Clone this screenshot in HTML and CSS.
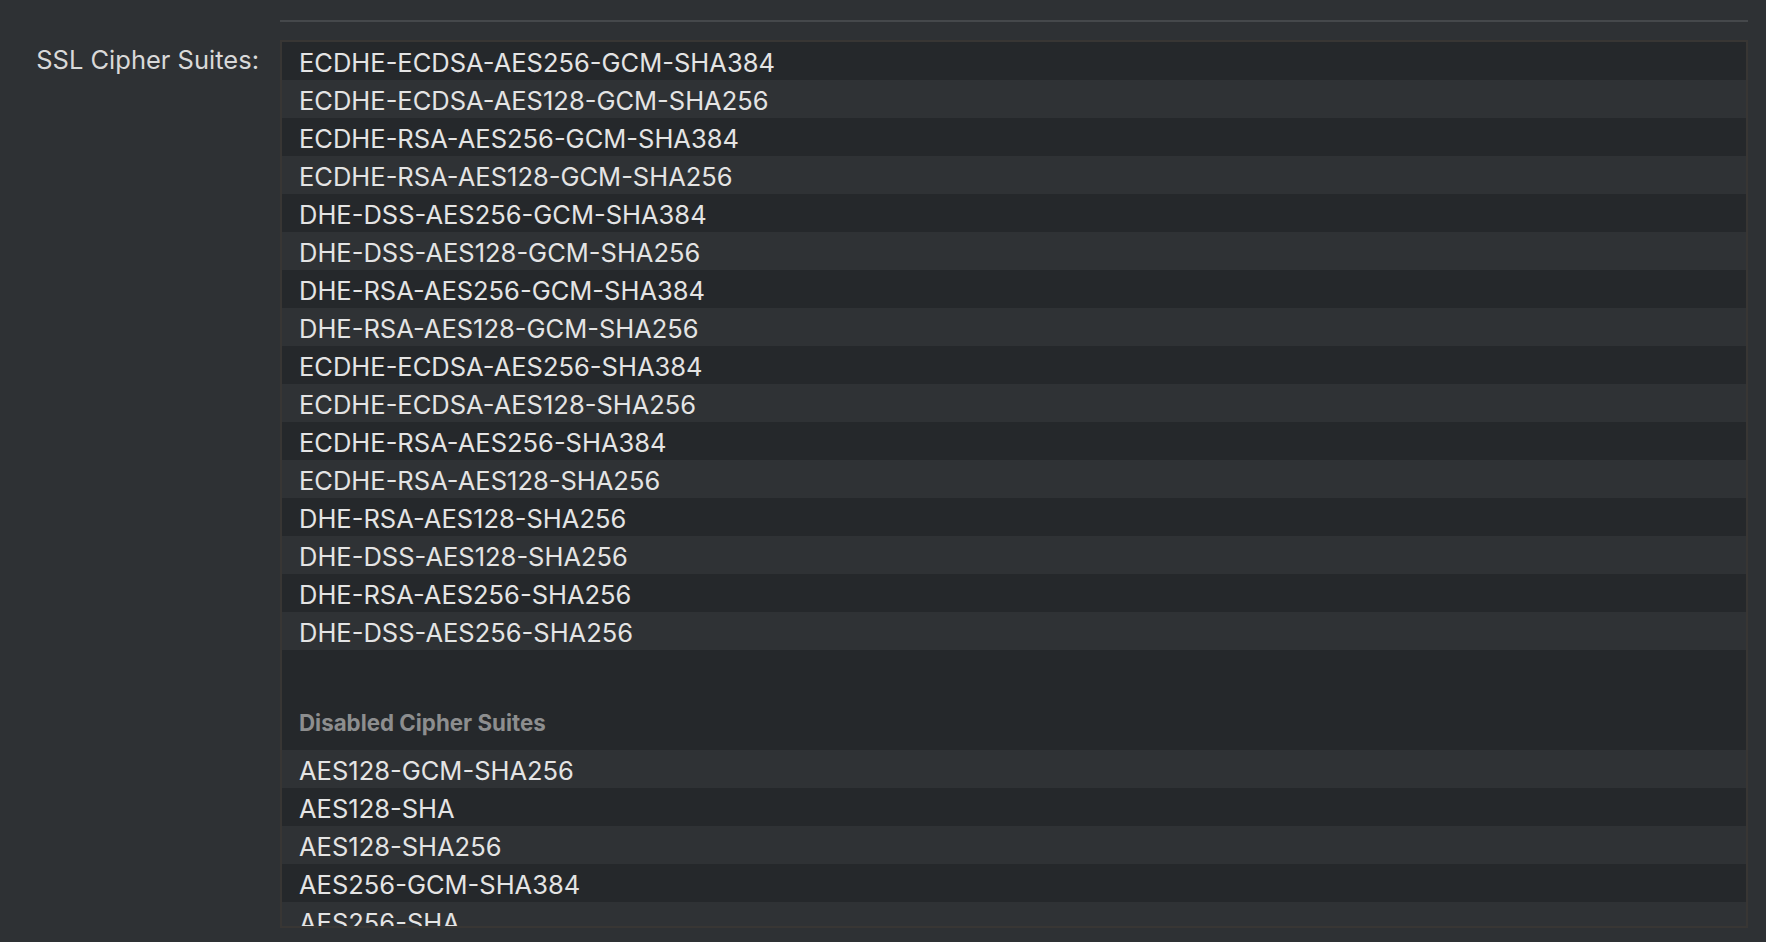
FILE: index.html
```html
<!DOCTYPE html>
<html lang="en">
<head>
<meta charset="utf-8">
<title>SSL Cipher Suites</title>
<link rel="stylesheet" href="styles.css">
</head>
<body>
<div class="page">
  <div class="rule-row">
    <div class="label-col"></div>
    <div class="rule"></div>
  </div>
  <div class="field">
    <div class="label-col"><span class="label">SSL Cipher Suites:</span></div>
    <div class="list">
      <div class="row">ECDHE-ECDSA-AES256-GCM-SHA384</div>
      <div class="row">ECDHE-ECDSA-AES128-GCM-SHA256</div>
      <div class="row">ECDHE-RSA-AES256-GCM-SHA384</div>
      <div class="row">ECDHE-RSA-AES128-GCM-SHA256</div>
      <div class="row">DHE-DSS-AES256-GCM-SHA384</div>
      <div class="row">DHE-DSS-AES128-GCM-SHA256</div>
      <div class="row">DHE-RSA-AES256-GCM-SHA384</div>
      <div class="row">DHE-RSA-AES128-GCM-SHA256</div>
      <div class="row">ECDHE-ECDSA-AES256-SHA384</div>
      <div class="row">ECDHE-ECDSA-AES128-SHA256</div>
      <div class="row">ECDHE-RSA-AES256-SHA384</div>
      <div class="row">ECDHE-RSA-AES128-SHA256</div>
      <div class="row">DHE-RSA-AES128-SHA256</div>
      <div class="row">DHE-DSS-AES128-SHA256</div>
      <div class="row">DHE-RSA-AES256-SHA256</div>
      <div class="row">DHE-DSS-AES256-SHA256</div>
      <div class="section-head">Disabled Cipher Suites</div>
      <div class="row light">AES128-GCM-SHA256</div>
      <div class="row dark">AES128-SHA</div>
      <div class="row light">AES128-SHA256</div>
      <div class="row dark">AES256-GCM-SHA384</div>
      <div class="row light">AES256-SHA</div>
    </div>
  </div>
</div>
</body>
</html>
```
FILE: styles.css
```css
html, body {
  margin: 0;
  padding: 0;
  background: #2e3134;
  height: 100%;
  overflow: hidden;
}

.page {
  display: flex;
  flex-direction: column;
  padding-top: 20px;
  font-family: Inter, "Liberation Sans", sans-serif;
  color: #dcdcdc;
}

.rule-row {
  display: flex;
  gap: 21px;
  padding-right: 18px;
}

.label-col {
  width: 259px;
  flex: none;
  display: flex;
  justify-content: flex-end;
}

.rule {
  flex: 1;
  height: 2px;
  background: #45484b;
}

.field {
  display: flex;
  gap: 21px;
  margin-top: 18px;
  padding-right: 18px;
}

.label {
  font-size: 25.5px;
  line-height: 38px;
  margin-top: 1px;
  color: #d9d9d9;
  white-space: nowrap;
}

.list {
  flex: 1;
  display: flex;
  flex-direction: column;
  border: 2px solid #383634;
  box-sizing: border-box;
  height: 888px;
  overflow: hidden;
  background: #2f3235;
}

.row {
  flex: none;
  height: 38px;
  line-height: 38px;
  padding-left: 17px;
  font-size: 25.5px;
  padding-top: 2px;
  box-sizing: border-box;
  color: #e4e4e4;
  white-space: nowrap;
}

.row:nth-child(odd) {
  background: #25282b;
}

.row:nth-child(even) {
  background: #2f3235;
}

.row.light {
  background: #2f3235;
}

.row.dark {
  background: #25282b;
}

.section-head {
  flex: none;
  height: 100px;
  box-sizing: border-box;
  padding: 60px 0 0 17px;
  background: #25282b;
  font-size: 22.3px;
  font-weight: 700;
  color: #8d8e8f;
  line-height: 26px;
}
```
